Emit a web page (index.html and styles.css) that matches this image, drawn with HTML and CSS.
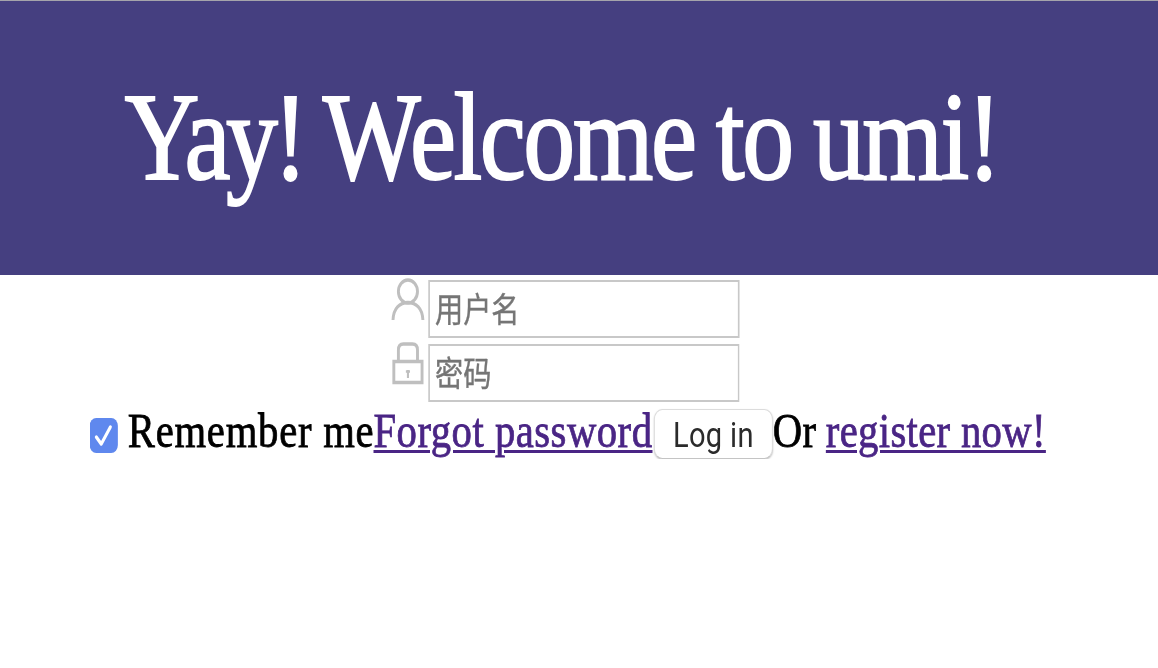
FILE: index.html
```html
<!DOCTYPE html>
<html lang="en">
<head>
    <meta charset="UTF-8">
    <meta name="viewport" content="width=device-width, initial-scale=1.0">
    <title>umi</title>
    <link rel="stylesheet" href="styles.css">
</head>
<body>
    <div class="page">
        <header class="banner">
            <h1><span class="yay">Yay!</span> Welcome to umi!</h1>
        </header>
        <form class="login-form">
            <div class="form-item">
                <svg class="icon" viewBox="0 0 42 46" preserveAspectRatio="none">
                    <ellipse cx="20.5" cy="14.5" rx="11.5" ry="11.5"/>
                    <path d="M2.5 43C3 31 11 25.5 20.5 25.5S38 31 38.5 43"/>
                </svg>
                <input class="field" type="text" placeholder="用户名">
            </div>
            <div class="form-item">
                <svg class="icon" viewBox="0 0 42 46" preserveAspectRatio="none">
                    <path d="M3.5 20.5h34v21h-34zM9 20.5V9q0-6 6-6h11q6 0 6 6v11.5"/>
                    <path class="keyhole" d="M20.5 29v8M18 30.5h5"/>
                </svg>
                <input class="field" type="password" placeholder="密码">
            </div>
            <div class="actions">
                <label class="remember">
                    <input class="checkbox" type="checkbox" checked>
                    <svg class="tick" viewBox="0 0 34 35"><path d="M8 19l6 7L25 9"/></svg>
                    <span class="remember-text">Remember me</span>
                </label>
                <a class="forgot" href="#">Forgot password</a>
                <button class="login-btn" type="button">Log in</button>
                <span class="or">Or</span>
                <a class="register" href="#">register now!</a>
            </div>
        </form>
    </div>
</body>
</html>
```

FILE: styles.css
```css
* {
    box-sizing: border-box;
}
html {
    overflow: hidden;
}
body {
    margin: 0;
    background: #fff;
    overflow: clip;
}
.page {
    width: calc(100% / 0.83 + 1px);
    transform: scaleX(0.83);
    transform-origin: 0 0;
    font-family: Georgia, "Liberation Serif", serif;
}
.banner {
    height: 275px;
    padding: 66px 0 0 150px;
    background: #453f80;
    border-top: 1px solid #a5a4ab;
}
h1 {
    margin: 0;
    color: #fff;
    font-size: 125px;
    font-weight: normal;
    line-height: 140px;
    letter-spacing: -3px;
    word-spacing: -2.5px;
    white-space: nowrap;
    -webkit-text-stroke: 2px #fff;
}
.yay {
    letter-spacing: -5.5px;
}
.form-item {
    display: flex;
    height: 64px;
    padding: 5px 0 0 471px;
}
.icon {
    width: 42px;
    height: 46px;
    margin-top: -3px;
    margin-right: 3px;
    fill: none;
    stroke: #bfbfbf;
    stroke-width: 3.5;
}
.icon .keyhole {
    stroke-width: 2.5;
}
.field {
    width: 375px;
    height: 58px;
    padding: 2px 6px 0;
    border: 2px solid #c8c8c8;
    font-family: "Liberation Sans", "Noto Sans CJK SC", sans-serif;
    font-size: 34px;
}
.field::placeholder {
    color: #757575;
    opacity: 1;
    -webkit-text-stroke: 0.4px #757575;
}
.actions {
    display: flex;
    padding-left: 108px;
    font-size: 49px;
    line-height: 56px;
    letter-spacing: 0.6px;
    white-space: nowrap;
    -webkit-text-stroke: 0.8px;
}
.remember {
    display: grid;
    grid-template-columns: 34px auto;
    column-gap: 12px;
    width: 342px;
}
.remember-text {
    letter-spacing: 0.9px;
}
.checkbox,
.tick {
    grid-row: 1;
    grid-column: 1;
    width: 34px;
    height: 35px;
    margin: 15px 0 0;
}
.checkbox {
    appearance: none;
    border-radius: 8px;
    background: #5f88ee;
}
.tick {
    z-index: 1;
    pointer-events: none;
    fill: none;
    stroke: #fff;
    stroke-width: 3.5;
    stroke-linecap: round;
    stroke-linejoin: round;
}
.actions a {
    color: #4a2585;
    text-decoration-thickness: 3px;
    text-underline-offset: 3px;
}
.forgot {
    width: 338px;
}
.login-btn {
    width: 143px;
    height: 50px;
    margin-top: 6px;
    padding: 3px 0 0;
    border: 1px solid #dcdcdc;
    border-bottom-color: #c4c4c4;
    border-radius: 10px;
    background: #fff;
    box-shadow: 0 1px 2px rgba(0, 0, 0, 0.25);
    color: #2b2b2b;
    font-family: Roboto, sans-serif;
    font-size: 35px;
    letter-spacing: 0.4px;
    -webkit-text-stroke: 0;
}
.or {
    width: 64px;
}
.register {
    letter-spacing: 0.4px;
}
```
